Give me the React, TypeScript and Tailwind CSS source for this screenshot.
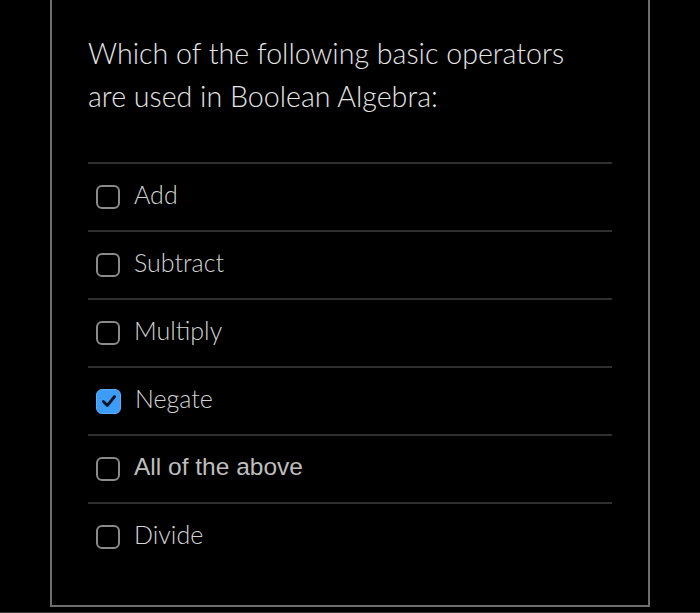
import { useState } from 'react';

const options = [
    { label: 'Add', font: 'lato' },
    { label: 'Subtract', font: 'lato' },
    { label: 'Multiply', font: 'lato' },
    { label: 'Negate', font: 'lato' },
    { label: 'All of the above', font: 'arial' },
    { label: 'Divide', font: 'lato' },
];

const CheckBox = ({ checked }: { checked: boolean }) => {
    if (checked) {
        return (
            <span className="flex h-[25px] w-[25px] shrink-0 items-center justify-center rounded-[6px] border border-[#5aaefc] bg-[#3d9cf5]">
                <svg width="18" height="18" viewBox="0 0 16 16" fill="none">
                    <path d="M3 8.5 L6.5 12 L13 4" stroke="#08142a" strokeWidth="2.5" strokeLinecap="round" strokeLinejoin="round" />
                </svg>
            </span>
        );
    }
    return <span className="block h-[24px] w-[24px] shrink-0 rounded-[6px] border-[2.5px] border-[#8a8a8a]" />;
};

export default function App() {
    const [selected, setSelected] = useState<number[]>([3]);

    const toggle = (i: number) => {
        setSelected(selected.includes(i) ? selected.filter((s) => s !== i) : [...selected, i]);
    };

    return (
        <div className="h-[613px] w-[700px] overflow-hidden bg-black">
            <div className="border-b border-[#3a3a3a] pb-[5px]">
                <div className="ml-[50px] w-[600px] border-x-2 border-b-2 border-[#6e6e6e] pl-[36px] pr-[36px] pt-[32px] pb-[35px]">
                    <h1 className="font-['Lato',sans-serif] text-[28.6px] font-light leading-[43px] text-[#e4e4e4]">
                        Which of the following basic operators
                        <br />
                        are used in Boolean Algebra:
                    </h1>

                    <div className="mt-[44px]">
                        {options.map((opt, i) => (
                            <div
                                key={opt.label}
                                onClick={() => toggle(i)}
                                className="flex h-[68px] cursor-pointer items-center gap-[14px] border-t-2 border-[#2f2f2f] pl-[8px]"
                            >
                                <CheckBox checked={selected.includes(i)} />
                                <span
                                    className={
                                        opt.font === 'arial'
                                            ? "mb-[4px] font-['Liberation_Sans',Arial,sans-serif] text-[24.5px] text-[#bebebe]"
                                            : "mb-[5px] font-['Lato',sans-serif] text-[25px] font-light text-[#d4d4d4]"
                                    }
                                >
                                    {opt.label}
                                </span>
                            </div>
                        ))}
                    </div>
                </div>
            </div>
        </div>
    );
}
